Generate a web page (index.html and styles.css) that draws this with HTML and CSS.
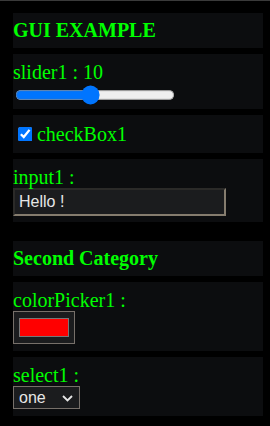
FILE: index.html
```html
<!DOCTYPE html>
<html lang="en">
<head>
<meta charset="utf-8">
<title>GUI Example</title>
<link rel="stylesheet" href="styles.css">
</head>
<body>
<div class="gui">
  <section class="category">
    <div class="panel title">GUI EXAMPLE</div>
    <div class="panel slider-panel">
      <label class="label" for="slider1">slider1 : 10</label>
      <input class="range" id="slider1" type="range" min="0" max="21.3" step="0.1" value="10">
    </div>
    <div class="panel check-panel">
      <input class="check" id="checkBox1" type="checkbox" checked><label for="checkBox1" class="check-label">checkBox1</label>
    </div>
    <div class="panel input-panel">
      <label class="label" for="input1">input1 :</label>
      <input class="text-input" id="input1" type="text" value="Hello !">
    </div>
  </section>
  <section class="category">
    <div class="panel title">Second Category</div>
    <div class="panel">
      <label class="label" for="colorPicker1">colorPicker1 :</label>
      <input class="color" id="colorPicker1" type="color" value="#ff0000">
    </div>
    <div class="panel">
      <label class="label" for="select1">select1 :</label>
      <div class="select-wrap">
        <select class="select" id="select1">
          <option>one</option>
          <option>two</option>
          <option>three</option>
        </select>
        <svg class="chevron" width="11" height="7" viewBox="0 0 11 7"><path d="M1 1 L5.5 5.5 L10 1" fill="none" stroke="#e6e6e6" stroke-width="1.8"/></svg>
      </div>
    </div>
  </section>
</div>
</body>
</html>
```
FILE: styles.css
```css
html, body {
  margin: 0;
  padding: 0;
  background: #000;
}
body {
  border-top: 1px solid #3a3a3a;
  font-family: "Liberation Serif", "Times New Roman", serif;
  color: #00ff00;
}
.gui {
  width: 250px;
  padding: 12px 0 0 13px;
  display: flex;
  flex-direction: column;
  gap: 19px;
}
.category {
  display: flex;
  flex-direction: column;
  gap: 6px;
}
.panel {
  background: #0c0d0f;
  padding: 7px 0 7px 0;
  font-size: 20px;
  line-height: 22px;
}
.title {
  font-weight: bold;
  padding: 6px 0 7px 0;
}
.label {
  display: block;
}
.slider-panel {
  padding-bottom: 2px;
}
.range {
  display: block;
  zoom: 1.2;
  width: 133px;
  margin: 2px;
}
.check-panel {
  padding: 8px 0 7px 0;
}
.check {
  zoom: 1.2;
  margin: 3px 3px 3px 4px;
  vertical-align: -1px;
}
.input-panel {
  padding-bottom: 6px;
}
.text-input {
  display: block;
  box-sizing: border-box;
  width: 213px;
  height: 28px;
  margin: 0;
  padding: 1px 4px;
  background: #1b1c1e;
  color: #e6e6e6;
  font-family: "Liberation Sans", Arial, sans-serif;
  font-size: 16px;
  border-width: 2px;
  border-style: solid;
  border-color: #2b2a28 #857c6e #857c6e #2b2a28;
  outline: none;
}
.color {
  display: block;
  box-sizing: border-box;
  width: 62px;
  height: 33px;
  margin: 0;
  padding: 0;
  background: #1b1c1e;
  border: 1px solid #77706a;
  -webkit-appearance: none;
  appearance: none;
}
.color::-webkit-color-swatch-wrapper {
  padding: 6px 5px;
}
.color::-webkit-color-swatch {
  border: 1px solid #777;
}
.select-wrap {
  position: relative;
  width: 67px;
}
.select {
  display: block;
  box-sizing: border-box;
  width: 67px;
  height: 23px;
  margin: 0;
  padding: 0 0 0 5px;
  -webkit-appearance: none;
  appearance: none;
  background: #1b1c1e;
  color: #e6e6e6;
  border: 1px solid #77706a;
  border-radius: 0;
  font-family: "Liberation Sans", Arial, sans-serif;
  font-size: 16px;
  line-height: normal;
}
.chevron {
  position: absolute;
  right: 7px;
  top: 9px;
  pointer-events: none;
}
```
